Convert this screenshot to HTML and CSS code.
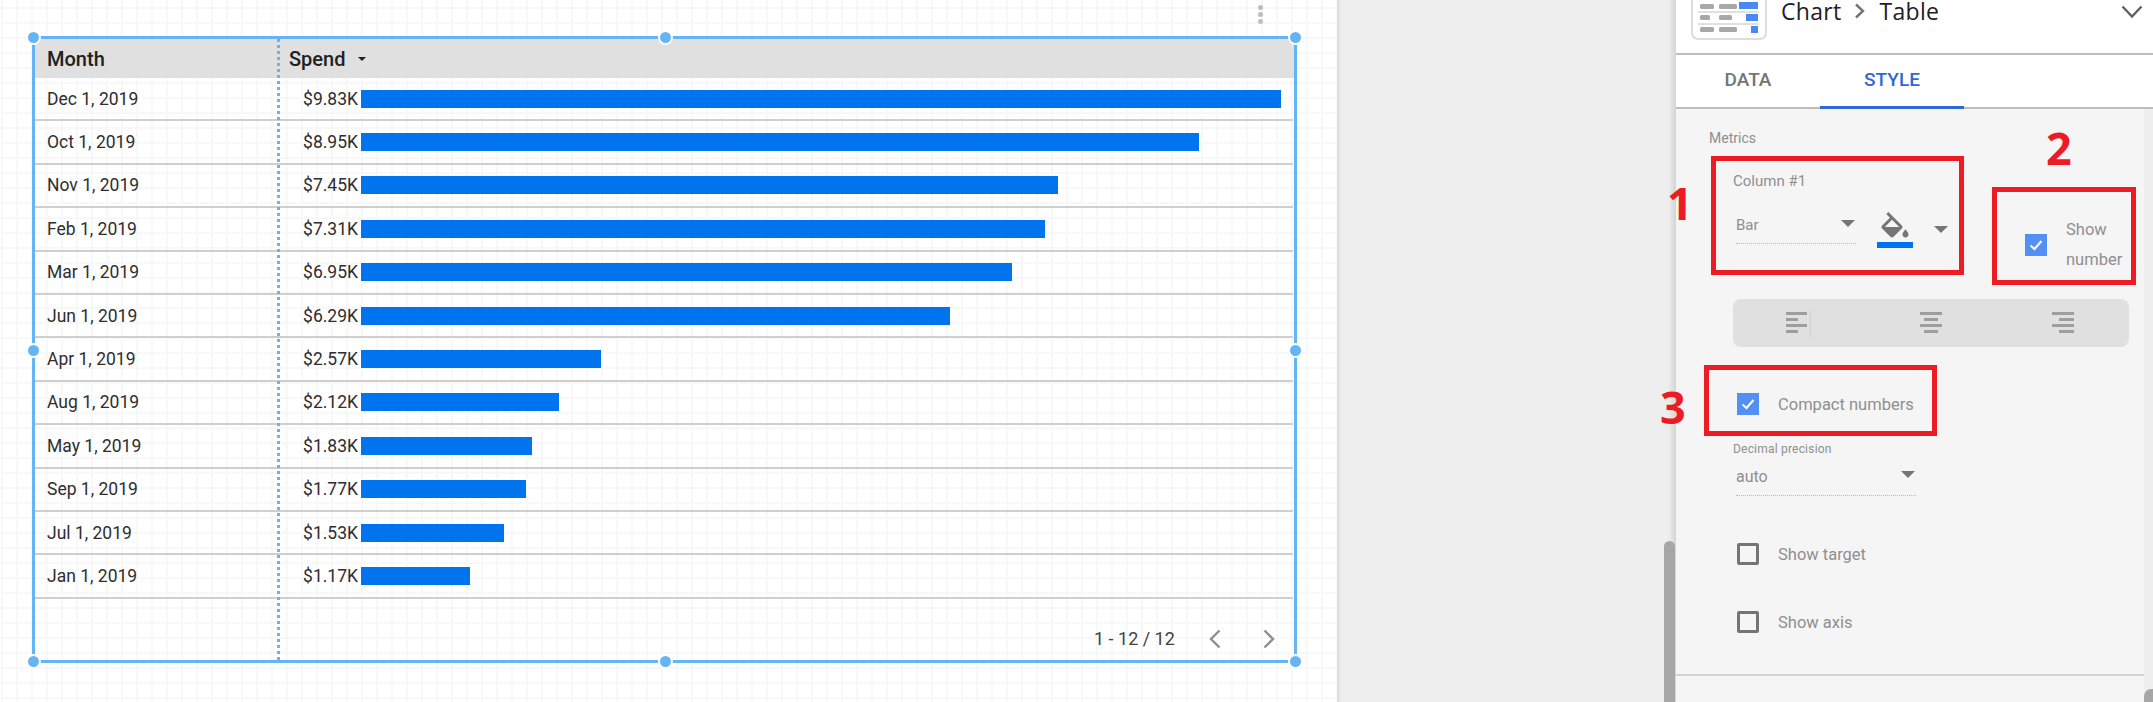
FILE: index.html
```html
<!DOCTYPE html>
<html lang="en">
<head>
    <meta charset="UTF-8">
    <title>Chart Table style</title>
    <link rel="stylesheet" href="styles.css">
</head>
<body>
    <div class="canvas">
        <div class="chart">
            <div class="chart-menu"><i></i><i></i><i></i></div>
            <span class="handle tl"></span><span class="handle tc"></span><span class="handle tr"></span>
            <span class="handle ml"></span><span class="handle mr"></span>
            <span class="handle bl"></span><span class="handle bc"></span><span class="handle br"></span>
            <div class="col-line"></div>

            <div class="row head">
                <div class="month">Month</div>
                <div class="spend">Spend <span class="sort"></span></div>
            </div>
            <div class="row"><div class="month">Dec 1, 2019</div><div class="val">$9.83K</div><div class="bar" style="width:920px"></div></div>
            <div class="row"><div class="month">Oct 1, 2019</div><div class="val">$8.95K</div><div class="bar" style="width:838px"></div></div>
            <div class="row"><div class="month">Nov 1, 2019</div><div class="val">$7.45K</div><div class="bar" style="width:697px"></div></div>
            <div class="row"><div class="month">Feb 1, 2019</div><div class="val">$7.31K</div><div class="bar" style="width:684px"></div></div>
            <div class="row"><div class="month">Mar 1, 2019</div><div class="val">$6.95K</div><div class="bar" style="width:651px"></div></div>
            <div class="row"><div class="month">Jun 1, 2019</div><div class="val">$6.29K</div><div class="bar" style="width:589px"></div></div>
            <div class="row"><div class="month">Apr 1, 2019</div><div class="val">$2.57K</div><div class="bar" style="width:240px"></div></div>
            <div class="row"><div class="month">Aug 1, 2019</div><div class="val">$2.12K</div><div class="bar" style="width:198px"></div></div>
            <div class="row"><div class="month">May 1, 2019</div><div class="val">$1.83K</div><div class="bar" style="width:171px"></div></div>
            <div class="row"><div class="month">Sep 1, 2019</div><div class="val">$1.77K</div><div class="bar" style="width:165px"></div></div>
            <div class="row"><div class="month">Jul 1, 2019</div><div class="val">$1.53K</div><div class="bar" style="width:143px"></div></div>
            <div class="row"><div class="month">Jan 1, 2019</div><div class="val">$1.17K</div><div class="bar" style="width:109px"></div></div>

            <div class="pager">
                <span>1 - 12 / 12</span>
                <svg class="pager-prev" width="12" height="20" viewBox="0 0 12 20"><path d="M10.5 1.5 2 10l8.5 8.5" fill="none" stroke="#8f8f8f" stroke-width="2.4"/></svg>
                <svg class="pager-next" width="12" height="20" viewBox="0 0 12 20"><path d="M1.5 1.5 10 10l-8.500 8.500" fill="none" stroke="#8f8f8f" stroke-width="2.4"/></svg>
            </div>
        </div>
    </div>

    <div class="gutter"><div class="thumb"></div></div>

    <div class="panel">
        <div class="panel-head">
            <svg class="table-icon" width="76" height="41" viewBox="0 0 76 41">
                <rect x="1" y="-8" width="74" height="47" rx="6" fill="#fff" stroke="#ddd" stroke-width="2"/>
                <g fill="#a8a8a8">
                    <rect x="9" y="4" width="14" height="5" rx="1.500"/><rect x="28" y="4" width="18" height="5" rx="1.500"/>
                    <rect x="9" y="15" width="10" height="5" rx="1.500"/><rect x="28" y="15" width="13" height="5" rx="1.500"/>
                    <rect x="9" y="27" width="14" height="5" rx="1.500"/><rect x="28" y="27" width="18" height="5" rx="1.500"/>
                </g>
                <g fill="#e0e0e0"><rect x="7" y="11" width="61" height="2"/><rect x="7" y="23" width="61" height="2"/></g>
                <g fill="#4a88f5"><rect x="48" y="2" width="19" height="7"/><rect x="55" y="14" width="12" height="7"/><rect x="60" y="26" width="7" height="7"/></g>
            </svg>
            <div class="crumbs">
                <span>Chart</span>
                <svg width="12" height="16" viewBox="0 0 12 16"><path d="M2 1.500 9 8l-7 6.500" fill="none" stroke="#757575" stroke-width="2.400"/></svg>
                <span>Table</span>
            </div>
            <svg class="collapse" width="22" height="14" viewBox="0 0 22 14"><path d="M1.500 1.500 11 11.500l9.500-10" fill="none" stroke="#616161" stroke-width="2.400"/></svg>
        </div>

        <div class="tabs">
            <div class="tab">DATA</div>
            <div class="tab active">STYLE</div>
        </div>

        <div class="panel-main">
            <div class="panel-body">
                <span class="num num1">1</span>
                <span class="num num2">2</span>
                <span class="num num3">3</span>

                <div class="section-label">Metrics</div>

                <div class="metric-row">
                    <div class="red-box col-box">
                        <div class="small-label">Column #1</div>
                        <div class="col-controls">
                            <div class="select bar-select"><span>Bar</span><span class="tri"></span></div>
                            <div class="fill">
                                <svg width="36" height="30" viewBox="0 0 24 20"><path fill="#757575" d="M16.560 8.940 7.620 0 6.210 1.410l2.380 2.380-5.150 5.150c-.59.59-.59 1.540 0 2.120l5.500 5.500c.29.29.68.44 1.060.44s.77-.15 1.060-.44l5.500-5.500c.59-.58.59-1.530 0-2.120zM5.210 10 10 5.210 14.790 10H5.210zM19 11.500s-2 2.170-2 3.500c0 1.100.9 2 2 2s2-.9 2-2c0-1.330-2-3.500-2-3.500z"/></svg>
                                <div class="fill-swatch"></div>
                            </div>
                            <span class="tri fill-tri"></span>
                        </div>
                    </div>
                    <div class="red-box show-box">
                        <span class="check on"><svg width="22" height="22" viewBox="0 0 22 22"><path d="M5.500 11.500 9.500 15l7-8" fill="none" stroke="#fff" stroke-width="2"/></svg></span>
                        <div class="show-text">Show<br>number</div>
                    </div>
                </div>

                <div class="align-group">
                    <div class="align-cell">
                        <svg width="26" height="26" viewBox="0 0 26 26"><g fill="#9e9e9e"><rect x="0" y="1" width="21" height="3"/><rect x="0" y="7" width="12" height="3"/><rect x="0" y="13" width="21" height="3"/><rect x="0" y="19" width="12" height="3"/></g><rect x="24" y="0" width="1" height="26" fill="#d0d0d0"/></svg>
                    </div>
                    <div class="align-cell">
                        <svg width="22" height="26" viewBox="0 0 22 26"><g fill="#9e9e9e"><rect x="0" y="1" width="22" height="3"/><rect x="4" y="7" width="14" height="3"/><rect x="0" y="13" width="22" height="3"/><rect x="4" y="19" width="14" height="3"/></g></svg>
                    </div>
                    <div class="align-cell">
                        <svg width="22" height="26" viewBox="0 0 22 26"><g fill="#9e9e9e"><rect x="0" y="1" width="22" height="3"/><rect x="7" y="7" width="15" height="3"/><rect x="0" y="13" width="22" height="3"/><rect x="7" y="19" width="15" height="3"/></g></svg>
                    </div>
                </div>

                <div class="red-box compact-box">
                    <span class="check on"><svg width="22" height="22" viewBox="0 0 22 22"><path d="M5.500 11.500 9.500 15l7-8" fill="none" stroke="#fff" stroke-width="2"/></svg></span>
                    <span class="opt-text">Compact numbers</span>
                </div>

                <div class="decimal-label">Decimal precision</div>
                <div class="select auto-select"><span>auto</span><span class="tri"></span></div>

                <div class="opt first-opt"><span class="check"></span><span class="opt-text">Show target</span></div>
                <div class="opt"><span class="check"></span><span class="opt-text">Show axis</span></div>

                <div class="body-rule"></div>
            </div>
            <div class="panel-strip"><div class="strip-thumb"></div></div>
        </div>
    </div>
</body>
</html>
```

FILE: styles.css
```css
* { box-sizing: border-box; }
body { margin: 0; height: 702px; width: 2153px; overflow: hidden; display: flex; font-family: Roboto, sans-serif; background: #eee; color: #212121; }

/* report canvas */
.canvas {
    width: 1337px; height: 702px; padding: 36px 0 0 32px; background-color: #fff;
    background-image: linear-gradient(90deg, #f8f8f8 2px, transparent 2px), linear-gradient(#f8f8f8 2px, transparent 2px);
    background-size: 15px 15px; background-position: 1px 7px;
}
.chart { position: relative; width: 1265px; height: 627px; border: 3px solid #64b5f6; }
.chart-menu { position: absolute; left: 1223px; top: -34px; display: flex; flex-direction: column; gap: 2px; }
.chart-menu i { width: 5px; height: 5px; border-radius: 50%; background: #bdbdbd; }

.handle { position: absolute; width: 15px; height: 15px; border-radius: 50%; background: #64b5f6; border: 2px solid #fff; z-index: 2; }
.tl, .tc, .tr { top: -9px; }
.bl, .bc, .br { bottom: -9px; }
.ml, .mr { top: 304px; }
.tl, .ml, .bl { left: -9px; }
.tc, .bc { left: 623px; }
.tr, .mr, .br { right: -9px; }

.col-line {
    position: absolute; left: 242px; top: 0; bottom: 0; width: 3px; z-index: 1;
    background: repeating-linear-gradient(#64b5f6 0 3px, transparent 3px 6px);
}

.row { display: flex; align-items: center; height: 43.4px; margin-right: 1px; border-bottom: 2px solid #cfcfcf; font-size: 17.5px; color: #2e2e2e; }
.month { width: 245px; padding-left: 12px; flex: none; }
.val { width: 78px; text-align: right; flex: none; }
.bar { height: 18px; margin-left: 3px; background: #0073ee; }
.row.head { height: 39px; margin-right: 0; border: 0; background: #e0e0e0; color: #212121; font-size: 20px; font-weight: 500; border-top-right-radius: 6px; }
.spend { padding-left: 9px; display: flex; align-items: center; }
.sort { width: 0; height: 0; margin-left: 13px; border: 4.500px solid transparent; border-top-color: #212121; border-bottom: 0; }

.pager { display: flex; align-items: center; height: 61px; padding: 19px 0 0 1059px; font-size: 18px; color: #424242; }
.pager-prev { margin-left: 34px; }
.pager-next { margin-left: 42px; }

/* grey strip between canvas and panel */
.gutter {
    width: 339px; height: 702px; display: flex; flex-direction: column; justify-content: flex-end; align-items: flex-end;
    background: linear-gradient(90deg, #d9d9d9, #eee 4px, #eee 331px, #d4d4d4);
}
.thumb { width: 11px; height: 161px; margin-right: 1px; background: #a6a6a6; border-radius: 6px 6px 0 0; }

/* properties panel */
.panel { width: 477px; height: 702px; display: flex; flex-direction: column; background: #fff; }
.panel-head { height: 55px; flex: none; display: flex; padding-left: 15px; border-bottom: 2px solid #bdbdbd; }
.table-icon { flex: none; }
.crumbs { display: flex; align-items: center; gap: 13px; height: 22px; line-height: 22px; margin-left: 14px; font-size: 23px; font-family: "Open Sans", sans-serif; letter-spacing: .3px; color: #212121; }
.collapse { margin: 5px 0 0 182px; }

.tabs { height: 54px; flex: none; display: flex; padding-left: 18px; border-bottom: 2px solid #bdbdbd; }
.tab { width: 126px; height: 54px; padding-right: 18px; line-height: 50px; text-align: center; font-size: 19px; font-weight: 500; color: #757575; }
.tab.active { width: 144px; padding-right: 0; color: #3367d6; border-bottom: 3px solid #3367d6; }

.panel-main { flex: 1; display: flex; min-height: 0; }
.panel-body { position: relative; width: 468px; padding-top: 21px; background: #f5f5f5; color: #8f8f8f; font-size: 15px; }
.panel-strip { flex: 1; display: flex; flex-direction: column; justify-content: flex-end; background: #eee; }
.strip-thumb { height: 13px; background: #a6a6a6; border-top-left-radius: 7px; }

.section-label { height: 16px; line-height: 16px; margin-left: 33px; font-size: 14px; }

.num { position: absolute; font: 700 45px/40px "Noto Sans", sans-serif; color: #ed1c24; }
.num1 { left: -9px; top: 74px; }
.num2 { left: 370px; top: 19px; }
.num3 { left: -16px; top: 278px; }

.red-box { border: 5px solid #ed1c24; }
.metric-row { display: flex; height: 129px; margin: 10px 0 0 35px; }
.col-box { width: 253px; height: 119px; padding: 12px 0 0 17px; }
.small-label { height: 16px; line-height: 16px; font-size: 15px; }
.col-controls { display: flex; align-items: flex-start; margin: 20px 0 0 3px; }

.select { display: flex; justify-content: space-between; align-items: center; border-bottom: 1px dotted #bbb; padding: 0 0 1px 0; }
.tri { width: 0; height: 0; border: 7px solid transparent; border-top: 7px solid #757575; border-bottom: 0; }
.bar-select { width: 120px; height: 35px; padding: 0 1px 3px 0; }
.bar-select .tri { margin-top: -2px; }
.fill { width: 36px; margin: 3px 0 0 21px; }
.fill svg { display: block; }
.fill-swatch { height: 6px; background: #0073ee; }
.fill-tri { margin: 17px 0 0 21px; }

.show-box { width: 144px; height: 98px; margin: 31px 0 0 28px; padding: 18px 0 0 28px; display: flex; align-items: center; gap: 19px; }
.show-text { line-height: 30px; font-size: 16.5px; }

.check { width: 22px; height: 22px; flex: none; display: block; border: 3px solid #757575; border-radius: 2px; }
.check.on { border: 0; background: #5290f5; border-radius: 0; }
.check svg { display: block; }

.align-group { display: grid; grid-template-columns: repeat(3, 1fr); width: 396px; height: 48px; margin: 14px 0 0 57px; background: #e0e0e0; border-radius: 8px; }
.align-cell { display: flex; align-items: center; justify-content: center; }
.align-cell svg { display: block; margin-top: 2px; }

.compact-box { width: 233px; height: 71px; margin: 18px 0 0 28px; padding: 6px 0 0 28px; display: flex; align-items: center; gap: 19px; }
.opt-text { font-size: 16.5px; }
.compact-box .opt-text { margin-top: 2px; }

.decimal-label { height: 14px; line-height: 14px; margin: 6px 0 0 57px; font-size: 12px; letter-spacing: .2px; }
.auto-select { width: 180px; height: 37px; margin: 3px 0 0 60px; font-size: 16px; padding: 0 1px 1px 0; }
.auto-select .tri { margin-top: -4px; }

.opt { display: flex; align-items: center; gap: 19px; height: 22px; margin: 46px 0 0 61px; }
.first-opt { margin-top: 47px; }
.body-rule { height: 2px; margin-top: 41px; background: #d2d2d2; }
```
